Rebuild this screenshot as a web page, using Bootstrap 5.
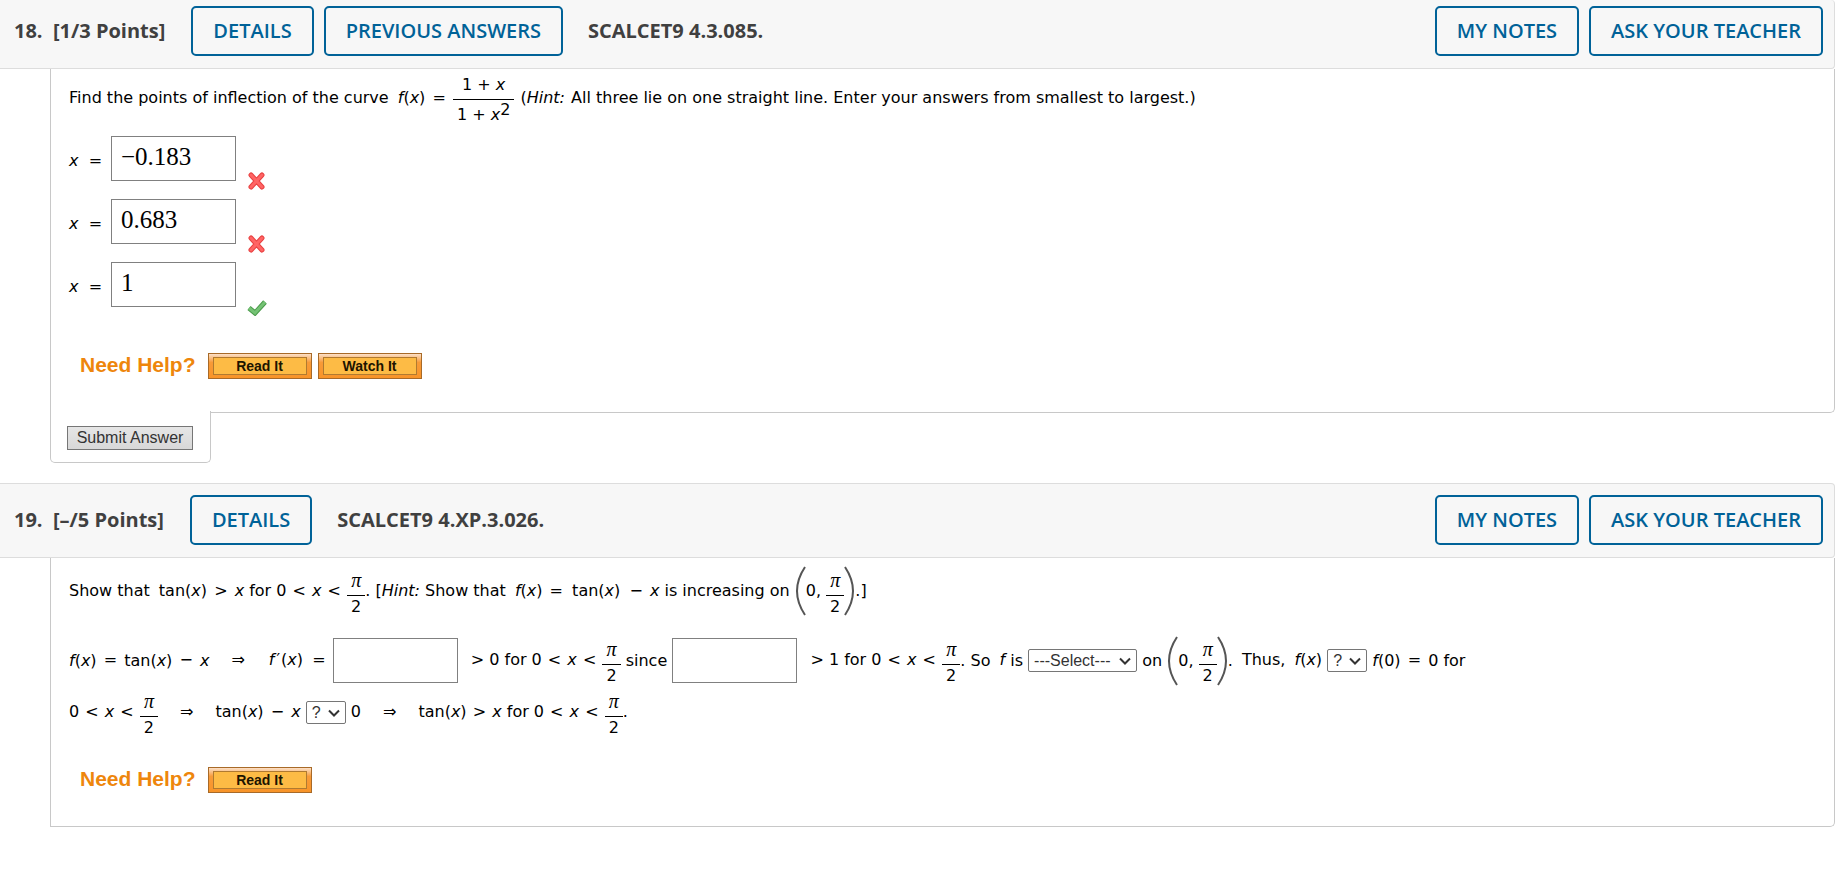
<!DOCTYPE html>
<html lang="en">
<head>
<meta charset="utf-8">
<meta name="viewport" content="width=device-width, initial-scale=1">
<title>Assignment questions</title>
<link href="https://cdn.jsdelivr.net/npm/bootstrap@5.3.0/dist/css/bootstrap.min.css" rel="stylesheet">
<style>
  body { font-family: "DejaVu Sans", Verdana, sans-serif; font-size: 16px; line-height: 24px; color: #000; background: #fff; }
  .q-head { background: #f7f7f7; border: 1px solid #ddd; border-left: 0; border-radius: 0 4px 4px 0; padding: 11px 11px 12px 14px; margin-right: 1px; font-family: "Open Sans", sans-serif; }
  .q-first { border-top: 0; padding-top: 6px; }
  .q-tools { gap: 10px; margin: 0 25px 0 26px; }
  .q-title { font-size: 20px; line-height: 28px; font-weight: 700; color: #404040; margin: 0; white-space: pre; }
  .q-btn { --bs-btn-color: #006298; --bs-btn-border-color: #006298; --bs-btn-hover-bg: #006298; --bs-btn-hover-color: #fff; --bs-btn-border-width: 2px; --bs-btn-border-radius: 5px; --bs-btn-padding-x: 20px; --bs-btn-padding-y: 9px; --bs-btn-font-size: 20px; --bs-btn-line-height: 28px; --bs-btn-font-weight: 600; }
  .q-body { margin-left: 50px; margin-right: 1px; border: 1px solid #c8c8c8; border-top: 0; border-radius: 0 0 5px 0; padding-left: 18px; }
  .q-submit { position: relative; width: 161px; margin: -2px 0 20px 50px; padding: 15px 0 12px 16px; background: #fff; border: 1px solid #c8c8c8; border-top: 0; border-radius: 0 0 5px 5px; }
  .submit-btn { height: 24px; width: 126px; padding: 0; border: 1px solid #767676; background: linear-gradient(#e6e6e6, #d8d8d8); color: #333; font: 16px/20px "Liberation Sans", sans-serif; }
  .math-line { white-space: nowrap; }
  .line-first { padding-top: 5px; }
  .line-gap { padding-top: 18px; }
  .line-next { padding-top: 3px; }
  .expr { margin-left: 4px; }
  .op { margin: 0 2px; }
  .rel { margin: 0 1px; }
  .frac { display: inline-flex; flex-direction: column; align-items: center; vertical-align: 9px; line-height: 22px; }
  .frac > span { padding: 0 4px; }
  .frac > .pi { padding-bottom: 4px; font: italic 20px/22px "Liberation Serif", serif; }
  .frac > .den { border-top: 1px solid #000; align-self: stretch; text-align: center; }
  .frac-tall { vertical-align: 13px; }
  .frac-tall > .num { padding-bottom: 3px; }
  .frac-tall > .den { padding: 4px 4px 0; }
  .frac sup { font-size: 16px; top: -5px; line-height: 0; }
  .answer { width: 125px; height: 45px; border: 1px solid #808080; border-radius: 0; padding: 0 9px 3px; font: 25px/36px "Liberation Serif", serif; color: #000; vertical-align: middle; background: #fff; }
  .answers { padding-top: 10px; }
  .answer-row { height: 63px; }
  .eq-label { width: 42px; padding-top: 13px; }
  .mark-icon { width: 20px; height: 18px; margin: 36px 0 0 11px; }
  .pick { appearance: none; height: 23px; border: 1px solid #767676; border-radius: 2px; padding: 0 5px; font: 16px/20px "Liberation Sans", sans-serif; color: #333; vertical-align: middle; background: #fff url("data:image/svg+xml,%3Csvg xmlns='http://www.w3.org/2000/svg' viewBox='0 0 12 8'%3E%3Cpath d='M1 1.5l5 5 5-5' fill='none' stroke='%23333' stroke-width='2'/%3E%3C/svg%3E") no-repeat right 5px center / 12px 8px; }
  .pick-word { width: 109px; }
  .pick-sign { width: 40px; }
  .paren { width: 11px; height: 50px; vertical-align: middle; fill: none; stroke: #555; stroke-width: 2; }
  .imp { margin: 0 22px; }
  .prime { margin: 0 1px 0 2px; }
  .help { padding: 28px 0 33px 11px; gap: 6px; }
  .help-word { font: bold 21px/26px "Liberation Sans", sans-serif; color: #ee860c; margin: -2px 6px 0 0; }
  .help-btn { width: 104px; height: 26px; padding: 3px 4px; border: 1px solid #a86a28; background: linear-gradient(#fce0c8, #f89a38 35%, #f89428); }
  .help-btn span { display: block; border: 1px solid #b07a30; background: #fdbb45; color: #1c1400; font: bold 14px/16px "Liberation Sans", sans-serif; }
</style>
</head>
<body>
<main>
  <section>
    <header class="q-head q-first d-flex align-items-center">
      <h2 class="q-title">18.  [1/3 Points]</h2>
      <div class="q-tools d-flex">
        <button type="button" class="btn q-btn">DETAILS</button>
        <button type="button" class="btn q-btn">PREVIOUS ANSWERS</button>
      </div>
      <h3 class="q-title">SCALCET9 4.3.085.</h3>
      <div class="q-tools d-flex ms-auto me-0">
        <button type="button" class="btn q-btn">MY NOTES</button>
        <button type="button" class="btn q-btn">ASK YOUR TEACHER</button>
      </div>
    </header>
    <div class="q-body">
      <div class="math-line line-first">Find the points of inflection of the curve <span class="expr"><i>f</i>(<i>x</i>)</span> <span class="op">=</span> <span class="frac frac-tall"><span class="num">1 + <i>x</i></span><span class="den">1 + <i>x</i><sup>2</sup></span></span> <span class="rel">(<i>Hint:</i></span> All three lie on one straight line. Enter your answers from smallest to largest.)</div>
      <div class="answers">
        <div class="answer-row d-flex align-items-start">
          <label for="a1" class="eq-label"><i>x</i>&nbsp; =</label>
          <input id="a1" class="answer" type="text" value="−0.183">
          <svg class="mark-icon" viewBox="0 0 20 18" role="img" aria-label="Incorrect"><path d="M4 3l11 12M15 3L4 15" stroke="#e84040" stroke-width="5" stroke-linecap="round"/><path d="M4 3l11 12M15 3L4 15" stroke="#ff6464" stroke-width="3" stroke-linecap="round"/></svg>
        </div>
        <div class="answer-row d-flex align-items-start">
          <label for="a2" class="eq-label"><i>x</i>&nbsp; =</label>
          <input id="a2" class="answer" type="text" value="0.683">
          <svg class="mark-icon" viewBox="0 0 20 18" role="img" aria-label="Incorrect"><path d="M4 3l11 12M15 3L4 15" stroke="#e84040" stroke-width="5" stroke-linecap="round"/><path d="M4 3l11 12M15 3L4 15" stroke="#ff6464" stroke-width="3" stroke-linecap="round"/></svg>
        </div>
        <div class="answer-row d-flex align-items-start">
          <label for="a3" class="eq-label"><i>x</i>&nbsp; =</label>
          <input id="a3" class="answer" type="text" value="1">
          <svg class="mark-icon" viewBox="0 0 20 18" role="img" aria-label="Correct"><path d="M2 10l6 5L18 4" fill="none" stroke="#4a9a4a" stroke-width="5"/><path d="M2 10l6 5L18 4" fill="none" stroke="#74c274" stroke-width="3"/></svg>
        </div>
      </div>
      <div class="help d-flex align-items-center">
        <span class="help-word">Need Help?</span>
        <button type="button" class="help-btn"><span>Read It</span></button>
        <button type="button" class="help-btn"><span>Watch It</span></button>
      </div>
    </div>
    <div class="q-submit"><button type="submit" class="submit-btn d-block">Submit Answer</button></div>
  </section>

  <section>
    <header class="q-head d-flex align-items-center">
      <h2 class="q-title">19.  [–/5 Points]</h2>
      <div class="q-tools d-flex">
        <button type="button" class="btn q-btn">DETAILS</button>
      </div>
      <h3 class="q-title">SCALCET9 4.XP.3.026.</h3>
      <div class="q-tools d-flex ms-auto me-0">
        <button type="button" class="btn q-btn">MY NOTES</button>
        <button type="button" class="btn q-btn">ASK YOUR TEACHER</button>
      </div>
    </header>
    <div class="q-body">
      <div class="math-line pt-2">Show that <span class="expr">tan(<i>x</i>)</span> <span class="op">&gt;</span> <i>x</i> for 0 <span class="rel">&lt;</span> <i>x</i> <span class="rel">&lt;</span> <span class="frac"><span class="pi">π</span><span class="den">2</span></span>. [<i>Hint:</i> Show that <span class="expr"><i>f</i>(<i>x</i>)</span> <span class="op">=</span> <span class="op">tan(<i>x</i>)</span> <span class="op">−</span> <i>x</i> is increasing on <svg class="paren" viewBox="0 0 11 50"><path d="M10 1Q-6 25 10 49"/></svg>0, <span class="frac"><span class="pi">π</span><span class="den">2</span></span><svg class="paren" viewBox="0 0 11 50"><path d="M1 1Q17 25 1 49"/></svg>.]</div>
      <div class="math-line line-gap"><i>f</i>(<i>x</i>) <span class="op">=</span> tan(<i>x</i>) <span class="op">−</span> <i>x</i><span class="imp">⇒</span><span class="op"><i>f</i><span class="prime">′</span>(<i>x</i>)</span> <span class="op">=</span> <input class="answer" type="text" aria-label="Derivative of f"><span class="ps-2"> &gt; 0 for 0 <span class="rel">&lt;</span> <i>x</i> <span class="rel">&lt;</span> </span><span class="frac"><span class="pi">π</span><span class="den">2</span></span> since <input class="answer" type="text" aria-label="Reason"><span class="ps-2"> &gt; 1 for 0 <span class="rel">&lt;</span> <i>x</i> <span class="rel">&lt;</span> </span><span class="frac"><span class="pi">π</span><span class="den">2</span></span>. So <i class="expr">f</i> is <select class="pick pick-word" aria-label="Behaviour of f"><option>---Select---</option><option>increasing</option><option>decreasing</option></select> on <svg class="paren" viewBox="0 0 11 50"><path d="M10 1Q-6 25 10 49"/></svg>0, <span class="frac"><span class="pi">π</span><span class="den">2</span></span><svg class="paren" viewBox="0 0 11 50"><path d="M1 1Q17 25 1 49"/></svg>. <span class="expr">Thus,</span> <span class="expr"><i>f</i>(<i>x</i>)</span> <select class="pick pick-sign" aria-label="Comparison with f(0)"><option>?</option><option>&lt;</option><option>&gt;</option></select> <i>f</i>(0) <span class="op">=</span> 0 for</div>
      <div class="math-line line-next">0 <span class="rel">&lt;</span> <i>x</i> <span class="rel">&lt;</span> <span class="frac"><span class="pi">π</span><span class="den">2</span></span><span class="imp">⇒</span>tan(<i>x</i>) <span class="op">−</span> <i>x</i> <select class="pick pick-sign" aria-label="Comparison with 0"><option>?</option><option>&lt;</option><option>&gt;</option></select> 0<span class="imp">⇒</span>tan(<i>x</i>) <span class="rel">&gt;</span> <i>x</i> for 0 <span class="rel">&lt;</span> <i>x</i> <span class="rel">&lt;</span> <span class="frac"><span class="pi">π</span><span class="den">2</span></span>.</div>
      <div class="help d-flex align-items-center">
        <span class="help-word">Need Help?</span>
        <button type="button" class="help-btn"><span>Read It</span></button>
      </div>
    </div>
  </section>
</main>
<script src="https://cdn.jsdelivr.net/npm/bootstrap@5.3.0/dist/js/bootstrap.bundle.min.js"></script>
</body>
</html>
